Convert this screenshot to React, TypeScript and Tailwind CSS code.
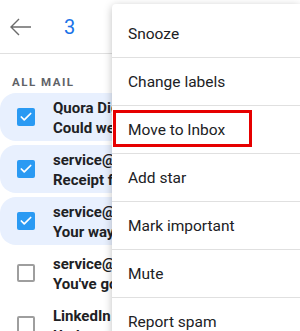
import { Check } from "lucide-react";

type Row = { from: string; line: string; selected: boolean };

const ROWS: Row[] = [
  { from: "Quora Digest", line: "Could we help you", selected: true },
  { from: "service@paypal.com", line: "Receipt for your payment", selected: true },
  { from: "service@paypal.com", line: "Your way to pay", selected: true },
  { from: "service@paypal.com", line: "You've got money", selected: false },
  { from: "LinkedIn", line: "Updates for you", selected: false },
];

const MENU = ["Snooze", "Change labels", "Move to Inbox", "Add star", "Mark important", "Mute", "Report spam"];

function Box({ on }: { on: boolean }) {
  if (on)
    return (
      <div className="flex h-[18px] w-[18px] shrink-0 items-center justify-center rounded-[2px] bg-[#2a9af3]">
        <Check size={14} strokeWidth={3} color="white" />
      </div>
    );
  return <div className="h-[18px] w-[18px] shrink-0 rounded-[2px] border-2 border-[#9e9e9e]" />;
}

export default function App() {
  return (
    <div className="relative h-[331px] w-[300px] overflow-hidden bg-white font-['Roboto',sans-serif] text-[#202124]">
      {/* top bar */}
      <div className="flex h-[54px] items-center border-b border-[#e0e0e0] pl-[9px]">
        <svg width="24" height="24" viewBox="0 0 24 24" fill="none" stroke="#6b6b6b" strokeWidth="1.4">
          <path d="M22 12H2M10 4l-8 8 8 8" />
        </svg>
        <span className="ml-[31px] text-[20px] leading-none text-[#1a73e8]">3</span>
      </div>

      <div className="pl-3 pt-[21px] pb-[4px] text-[11.5px] font-bold leading-[14px] tracking-[1.5px] text-[#5f6368]">
        ALL MAIL
      </div>

      <div className="flex flex-col gap-[4px]">
        {ROWS.map((r, i) => (
          <div
            key={i}
            className={`flex h-[48px] items-center gap-[18px] rounded-l-[16px] pl-[17px] ${r.selected ? "bg-[#e8f0fe]" : ""}`}
          >
            <Box on={r.selected} />
            <div className="flex flex-col whitespace-nowrap pt-[1px] text-[15px] font-bold leading-[20px]">
              <span>{r.from}</span>
              <span>{r.line}</span>
            </div>
          </div>
        ))}
      </div>

      {/* overflow menu */}
      <div className="absolute left-[112px] right-0 top-[4px] bottom-[-40px] rounded-tl-[4px] bg-white pt-[6px] shadow-[0_2px_8px_rgba(0,0,0,0.25)]">
        {MENU.map((m, i) => (
          <div key={m} className="relative flex h-[48px] items-center border-b border-[#e0e0e0] pl-4 pt-[3px] text-[15.5px]">
            {m}
            {i === 2 && (
              <div className="absolute left-[1px] top-[4px] h-[37px] w-[139px] border-[3px] border-[#e60000]" />
            )}
          </div>
        ))}
      </div>
    </div>
  );
}
